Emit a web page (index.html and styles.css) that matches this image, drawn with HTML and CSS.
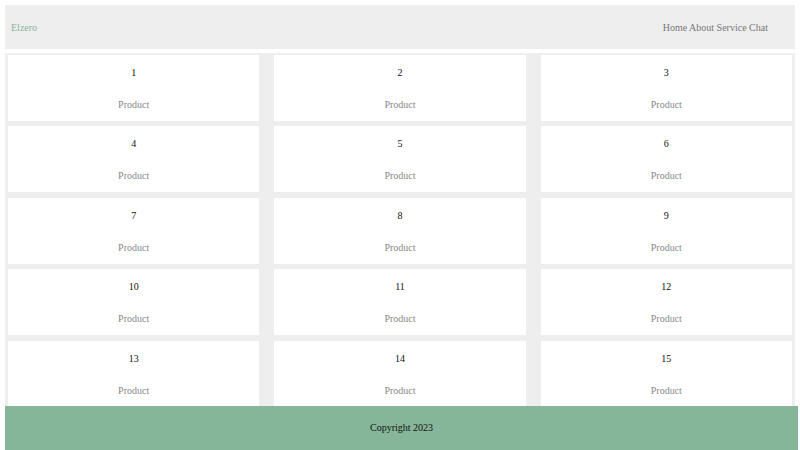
FILE: index.html
```html
<!DOCTYPE html>
<html>
<head>
<meta charset="utf-8">
<link rel="stylesheet" href="styles.css">
</head>
<body>
<header class="header">
  <div class="logo">Elzero</div>
  <nav class="nav"><a>Home</a> <a>About</a> <a>Service</a> <a>Chat</a></nav>
</header>
<main class="grid">
  <div class="card"><p class="num">1</p><p class="label">Product</p></div>
  <div class="card"><p class="num">2</p><p class="label">Product</p></div>
  <div class="card"><p class="num">3</p><p class="label">Product</p></div>
  <div class="card"><p class="num">4</p><p class="label">Product</p></div>
  <div class="card"><p class="num">5</p><p class="label">Product</p></div>
  <div class="card"><p class="num">6</p><p class="label">Product</p></div>
  <div class="card"><p class="num">7</p><p class="label">Product</p></div>
  <div class="card"><p class="num">8</p><p class="label">Product</p></div>
  <div class="card"><p class="num">9</p><p class="label">Product</p></div>
  <div class="card"><p class="num">10</p><p class="label">Product</p></div>
  <div class="card"><p class="num">11</p><p class="label">Product</p></div>
  <div class="card"><p class="num">12</p><p class="label">Product</p></div>
  <div class="card"><p class="num">13</p><p class="label">Product</p></div>
  <div class="card"><p class="num">14</p><p class="label">Product</p></div>
  <div class="card"><p class="num">15</p><p class="label">Product</p></div>
</main>
<footer class="footer">Copyright 2023</footer>
</body>
</html>
```
FILE: styles.css
```css
html, body {
  background: #fff;
}
body {
  margin: 5px;
  font-family: "Liberation Serif", "Times New Roman", serif;
  font-size: 10px;
  line-height: 12px;
  overflow: hidden;
}
.header {
  height: 44px;
  box-sizing: border-box;
  background: #eeeeee;
  display: flex;
  align-items: center;
  justify-content: space-between;
  padding: 2px 27px 0 6px;
}
.logo {
  color: #86b699;
}
.nav {
  color: #777;
}
.grid {
  margin-top: 4px;
  background: #eeeeee;
  padding: 2px 3px 3px 3px;
  display: grid;
  grid-template-columns: repeat(3, 1fr);
  gap: 5.4px 15px;
}
.card {
  background: #fff;
  height: 66px;
  box-sizing: border-box;
  padding-top: 12px;
  display: flex;
  flex-direction: column;
  align-items: center;
  gap: 20px;
}
.card p {
  margin: 0;
}
.num {
  color: #111;
}
.label {
  color: #888;
}
.footer {
  position: fixed;
  left: 5px;
  right: 2px;
  bottom: 0;
  height: 44px;
  background: #86b699;
  color: #111;
  display: flex;
  align-items: center;
  justify-content: center;
}
```
